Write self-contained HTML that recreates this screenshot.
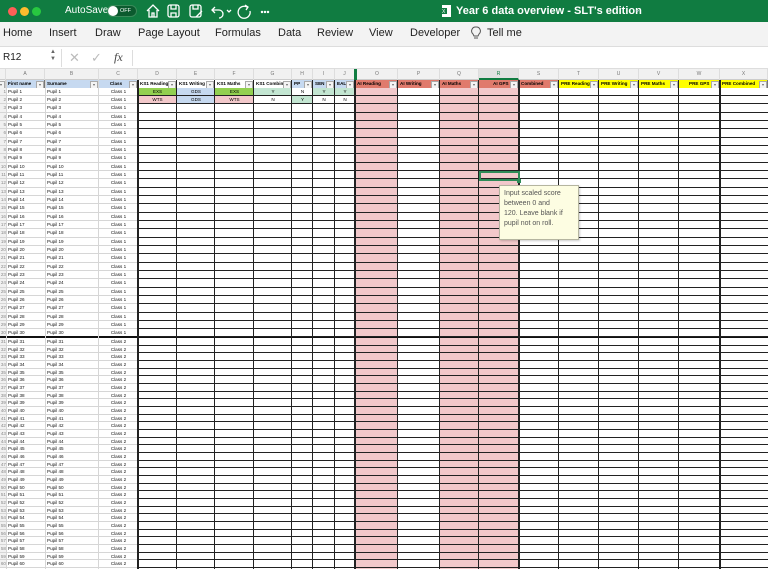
<!DOCTYPE html>
<html><head><meta charset="utf-8"><style>
*{margin:0;padding:0;box-sizing:border-box}
body{width:768px;height:569px;overflow:hidden;background:#fff;font-family:"Liberation Sans",sans-serif;position:relative}
.title{position:absolute;left:0;top:0;width:768px;height:22px;background:#107c41;color:#fff}
.dot{position:absolute;top:7px;width:9px;height:9px;border-radius:50%}
.rib{position:absolute;top:22px;left:0;width:768px;height:24px;background:#f3f3f3;font-size:11px;color:#222}
.rib span{position:absolute;top:5px}
.fb{position:absolute;top:46px;left:0;width:768px;height:23px;background:#fff;border-top:1px solid #ddd;border-bottom:1px solid #ddd}
.ch{position:absolute;top:69px;left:0;width:768px;height:11px;background:#f1f1f1;border-bottom:1px solid #ccc;font-size:5px;color:#777}
.ch span{position:absolute;text-align:center;border-right:1px solid #ddd;height:11px;top:0;line-height:11px}
.hdr{position:absolute;top:80px;left:0;width:768px;height:8px;border-bottom:1px solid #000}
.hdr div{position:absolute;top:0;height:8px;font-size:4.6px;font-weight:bold;line-height:8px;padding-left:2px;overflow:hidden;white-space:nowrap;border-right:1px solid #777}
.hdr div:after{content:"▾";position:absolute;right:0;top:1px;width:6px;height:6px;background:#f4f4f4;border:1px solid #aaa;font-size:4px;line-height:5px;text-align:center;color:#666;font-weight:normal}
.rows{position:absolute;top:88px;left:0;width:768px}
.r{position:relative;width:768px;border-bottom:1px solid #d6d6d6;font-size:4.6px;line-height:7px;white-space:nowrap}
.r1{height:8px}.r1:nth-child(3n){height:9px}
.r2{height:8px}.r2:nth-child(3n+2){height:7px}
.r:after{content:"";position:absolute;left:138px;right:0;bottom:-1px;height:1px;background:#222}
.r i{position:absolute;left:0;width:6px;overflow:hidden;direction:rtl;font-style:normal;color:#888;background:#f1f1f1;height:100%}
.r b{position:absolute;font-weight:normal;color:#111}
.a{left:8px}.b{left:47px}.c{left:99px;width:39px;text-align:center}
.v{position:absolute;top:80px;height:489px;width:1px;background:#222}
.vg{position:absolute;top:80px;height:489px;width:1px;background:#d6d6d6}
.pk{position:absolute;top:88px;height:481px;background:#f2c8ca}
.cell{position:absolute;font-size:4.6px;text-align:center;line-height:7px;height:7px}
</style></head><body>
<div class="title">
<div class="dot" style="left:8px;background:#ff5f57"></div>
<div class="dot" style="left:20px;background:#febc2e"></div>
<div class="dot" style="left:32px;background:#28c840"></div>
<span style="position:absolute;left:65px;top:5px;font-size:10px">AutoSave</span>
<div style="position:absolute;left:107px;top:5px;width:30px;height:12px;border-radius:6px;background:#0b5a2e;border:1px solid #3a8a5a"></div>
<div style="position:absolute;left:108px;top:6px;width:10px;height:10px;border-radius:50%;background:#fff"></div>
<span style="position:absolute;left:120px;top:8px;font-size:5.5px">OFF</span>
<svg style="position:absolute;left:145px;top:3px" width="130" height="16" fill="none" stroke="#fff" stroke-width="1.3">
<path d="M2 8 L8 2 L14 8 M4 7 V14 H12 V7 M7 14 V10 H9 V14"/>
<rect x="23" y="2" width="11" height="12" rx="2"/><path d="M26 2 V6 H31 V2 M26 14 V10 H31 V14"/>
<rect x="45" y="2" width="11" height="12" rx="2"/><path d="M48 2 V6 H53 V2 M51 14 L57 8"/>
<path d="M70 4 L67 7 L70 10 M67 7 H74 A4 4 0 0 1 74 15"/><path d="M82 7 L84 9 L86 7"/>
<path d="M102 4 A6 6 0 1 0 105 8 M100 2 L103 4 L101 7"/>
<circle cx="117" cy="9" r=".6"/><circle cx="120" cy="9" r=".6"/><circle cx="123" cy="9" r=".6"/>
</svg>
<svg style="position:absolute;left:441px;top:5px" width="11" height="12"><rect x="1" y="0" width="9" height="12" fill="#fff"/><rect x="0" y="3" width="6" height="6" fill="#107c41"/><text x="1" y="8" font-size="5" fill="#fff">X</text></svg>
<span style="position:absolute;left:456px;top:5px;font-size:11px;font-weight:bold">Year 6 data overview - SLT's edition</span>
<span style="position:absolute;left:634px;top:5px;font-size:8px;color:#bcd">⌄</span>
</div>
<div class="rib">
<span style="left:3px">Home</span><span style="left:49px">Insert</span><span style="left:95px">Draw</span><span style="left:138px">Page Layout</span><span style="left:215px">Formulas</span><span style="left:278px">Data</span><span style="left:317px">Review</span><span style="left:369px">View</span><span style="left:410px">Developer</span>
<svg style="position:absolute;left:471px;top:4px" width="10" height="14" fill="none" stroke="#555" stroke-width="1"><path d="M5 1 A4 4 0 0 1 8 8 L7 10 H3 L2 8 A4 4 0 0 1 5 1 M3 12 H7"/></svg>
<span style="left:487px">Tell me</span>
</div>
<div class="fb">
<span style="position:absolute;left:3px;top:5px;font-size:10px;color:#222">R12</span>
<span style="position:absolute;left:50px;top:2px;font-size:6px;color:#666;line-height:7px">▲<br>▼</span>
<div style="position:absolute;left:61px;top:2px;width:1px;height:18px;background:#ddd"></div>
<span style="position:absolute;left:69px;top:3px;font-size:13px;color:#bbb">✕</span>
<span style="position:absolute;left:91px;top:3px;font-size:13px;color:#bbb">✓</span>
<span style="position:absolute;left:114px;top:3px;font-size:12px;color:#444;font-style:italic;font-family:'Liberation Serif',serif">fx</span>
<div style="position:absolute;left:132px;top:3px;width:1px;height:16px;background:#ddd"></div>
</div>
<div class="ch">
<span style="left:0;width:6px"></span><span style="left:6px;width:39px">A</span><span style="left:45px;width:54px">B</span><span style="left:99px;width:39px">C</span><span style="left:138px;width:39px">D</span><span style="left:177px;width:38px">E</span><span style="left:215px;width:39px">F</span><span style="left:254px;width:38px">G</span><span style="left:292px;width:21px">H</span><span style="left:313px;width:22px">I</span><span style="left:335px;width:20px">J</span><span style="left:355px;width:43px;border-left:2px solid #107c41">O</span><span style="left:398px;width:42px">P</span><span style="left:440px;width:39px">Q</span><span style="left:479px;width:40px;background:#e2e2e2;color:#107c41;border-bottom:2px solid #107c41">R</span><span style="left:519px;width:40px">S</span><span style="left:559px;width:40px">T</span><span style="left:599px;width:40px">U</span><span style="left:639px;width:40px">V</span><span style="left:679px;width:41px">W</span><span style="left:720px;width:48px">X</span>
</div>
<div class="pk" style="left:355px;width:43px"></div>
<div class="pk" style="left:440px;width:79px"></div>
<div class="hdr">
<div style="left:0;width:6px;background:#f1f1f1;border-right:1px solid #ccc"></div>
<div style="left:6px;width:39px;background:#c6d9f0">First name</div>
<div style="left:45px;width:54px;background:#c6d9f0">Surname</div>
<div style="left:99px;width:39px;background:#c6d9f0;text-align:center;padding-right:6px">Class</div>
<div style="left:138px;width:39px;background:#fff">KS1 Reading</div>
<div style="left:177px;width:38px;background:#fff">KS1 Writing</div>
<div style="left:215px;width:39px;background:#fff">KS1 Maths</div>
<div style="left:254px;width:38px;background:#fff">KS1 Combined</div>
<div style="left:292px;width:21px;background:#c6d9f0">PP</div>
<div style="left:313px;width:22px;background:#c6d9f0">SEN</div>
<div style="left:335px;width:20px;background:#c6d9f0">EAL</div>
<div style="left:355px;width:43px;background:#e07a6c">AI Reading</div>
<div style="left:398px;width:42px;background:#e07a6c">AI Writing</div>
<div style="left:440px;width:39px;background:#e07a6c">AI Maths</div>
<div style="left:479px;width:40px;background:#e07a6c;padding-left:14px">AI GPS</div>
<div style="left:519px;width:40px;background:#e07a6c">Combined</div>
<div style="left:559px;width:40px;background:#ffff00">PRE Reading</div>
<div style="left:599px;width:40px;background:#ffff00">PRE Writing</div>
<div style="left:639px;width:40px;background:#ffff00">PRE Maths</div>
<div style="left:679px;width:41px;background:#ffff00;padding-left:10px">PRE GPS</div>
<div style="left:720px;width:48px;background:#ffff00">PRE Combined</div>
</div>
<div class="cell" style="left:138px;top:88px;width:39px;background:#92d050">EXS</div>
<div class="cell" style="left:177px;top:88px;width:38px;background:#c6d9f0">GDS</div>
<div class="cell" style="left:215px;top:88px;width:39px;background:#92d050">EXS</div>
<div class="cell" style="left:254px;top:88px;width:38px;background:#c3e6d2">Y</div>
<div class="cell" style="left:292px;top:88px;width:21px">N</div>
<div class="cell" style="left:313px;top:88px;width:22px;background:#c3e6d2">Y</div>
<div class="cell" style="left:335px;top:88px;width:20px;background:#c3e6d2">Y</div>
<div class="cell" style="left:138px;top:96px;width:39px;background:#f2c8ca">WTS</div>
<div class="cell" style="left:177px;top:96px;width:38px;background:#c6d9f0">GDS</div>
<div class="cell" style="left:215px;top:96px;width:39px;background:#f2c8ca">WTS</div>
<div class="cell" style="left:254px;top:96px;width:38px">N</div>
<div class="cell" style="left:292px;top:96px;width:21px;background:#c3e6d2">Y</div>
<div class="cell" style="left:313px;top:96px;width:22px">N</div>
<div class="cell" style="left:335px;top:96px;width:20px">N</div>
<div class="rows">
<div class="r r1"><i>1</i><b class="a">Pupil 1</b><b class="b">Pupil 1</b><b class="c">Class 1</b></div>
<div class="r r1"><i>2</i><b class="a">Pupil 2</b><b class="b">Pupil 2</b><b class="c">Class 1</b></div>
<div class="r r1"><i>3</i><b class="a">Pupil 3</b><b class="b">Pupil 3</b><b class="c">Class 1</b></div>
<div class="r r1"><i>4</i><b class="a">Pupil 4</b><b class="b">Pupil 4</b><b class="c">Class 1</b></div>
<div class="r r1"><i>5</i><b class="a">Pupil 5</b><b class="b">Pupil 5</b><b class="c">Class 1</b></div>
<div class="r r1"><i>6</i><b class="a">Pupil 6</b><b class="b">Pupil 6</b><b class="c">Class 1</b></div>
<div class="r r1"><i>7</i><b class="a">Pupil 7</b><b class="b">Pupil 7</b><b class="c">Class 1</b></div>
<div class="r r1"><i>8</i><b class="a">Pupil 8</b><b class="b">Pupil 8</b><b class="c">Class 1</b></div>
<div class="r r1"><i>9</i><b class="a">Pupil 9</b><b class="b">Pupil 9</b><b class="c">Class 1</b></div>
<div class="r r1"><i>10</i><b class="a">Pupil 10</b><b class="b">Pupil 10</b><b class="c">Class 1</b></div>
<div class="r r1"><i>11</i><b class="a">Pupil 11</b><b class="b">Pupil 11</b><b class="c">Class 1</b></div>
<div class="r r1"><i>12</i><b class="a">Pupil 12</b><b class="b">Pupil 12</b><b class="c">Class 1</b></div>
<div class="r r1"><i>13</i><b class="a">Pupil 13</b><b class="b">Pupil 13</b><b class="c">Class 1</b></div>
<div class="r r1"><i>14</i><b class="a">Pupil 14</b><b class="b">Pupil 14</b><b class="c">Class 1</b></div>
<div class="r r1"><i>15</i><b class="a">Pupil 15</b><b class="b">Pupil 15</b><b class="c">Class 1</b></div>
<div class="r r1"><i>16</i><b class="a">Pupil 16</b><b class="b">Pupil 16</b><b class="c">Class 1</b></div>
<div class="r r1"><i>17</i><b class="a">Pupil 17</b><b class="b">Pupil 17</b><b class="c">Class 1</b></div>
<div class="r r1"><i>18</i><b class="a">Pupil 18</b><b class="b">Pupil 18</b><b class="c">Class 1</b></div>
<div class="r r1"><i>19</i><b class="a">Pupil 19</b><b class="b">Pupil 19</b><b class="c">Class 1</b></div>
<div class="r r1"><i>20</i><b class="a">Pupil 20</b><b class="b">Pupil 20</b><b class="c">Class 1</b></div>
<div class="r r1"><i>21</i><b class="a">Pupil 21</b><b class="b">Pupil 21</b><b class="c">Class 1</b></div>
<div class="r r1"><i>22</i><b class="a">Pupil 22</b><b class="b">Pupil 22</b><b class="c">Class 1</b></div>
<div class="r r1"><i>23</i><b class="a">Pupil 23</b><b class="b">Pupil 23</b><b class="c">Class 1</b></div>
<div class="r r1"><i>24</i><b class="a">Pupil 24</b><b class="b">Pupil 24</b><b class="c">Class 1</b></div>
<div class="r r1"><i>25</i><b class="a">Pupil 25</b><b class="b">Pupil 25</b><b class="c">Class 1</b></div>
<div class="r r1"><i>26</i><b class="a">Pupil 26</b><b class="b">Pupil 26</b><b class="c">Class 1</b></div>
<div class="r r1"><i>27</i><b class="a">Pupil 27</b><b class="b">Pupil 27</b><b class="c">Class 1</b></div>
<div class="r r1"><i>28</i><b class="a">Pupil 28</b><b class="b">Pupil 28</b><b class="c">Class 1</b></div>
<div class="r r1"><i>29</i><b class="a">Pupil 29</b><b class="b">Pupil 29</b><b class="c">Class 1</b></div>
<div class="r r1" style="border-bottom:2px solid #111"><i>30</i><b class="a">Pupil 30</b><b class="b">Pupil 30</b><b class="c">Class 1</b></div>
<div class="r r2"><i>31</i><b class="a">Pupil 31</b><b class="b">Pupil 31</b><b class="c">Class 2</b></div>
<div class="r r2"><i>32</i><b class="a">Pupil 32</b><b class="b">Pupil 32</b><b class="c">Class 2</b></div>
<div class="r r2"><i>33</i><b class="a">Pupil 33</b><b class="b">Pupil 33</b><b class="c">Class 2</b></div>
<div class="r r2"><i>34</i><b class="a">Pupil 34</b><b class="b">Pupil 34</b><b class="c">Class 2</b></div>
<div class="r r2"><i>35</i><b class="a">Pupil 35</b><b class="b">Pupil 35</b><b class="c">Class 2</b></div>
<div class="r r2"><i>36</i><b class="a">Pupil 36</b><b class="b">Pupil 36</b><b class="c">Class 2</b></div>
<div class="r r2"><i>37</i><b class="a">Pupil 37</b><b class="b">Pupil 37</b><b class="c">Class 2</b></div>
<div class="r r2"><i>38</i><b class="a">Pupil 38</b><b class="b">Pupil 38</b><b class="c">Class 2</b></div>
<div class="r r2"><i>39</i><b class="a">Pupil 39</b><b class="b">Pupil 39</b><b class="c">Class 2</b></div>
<div class="r r2"><i>40</i><b class="a">Pupil 40</b><b class="b">Pupil 40</b><b class="c">Class 2</b></div>
<div class="r r2"><i>41</i><b class="a">Pupil 41</b><b class="b">Pupil 41</b><b class="c">Class 2</b></div>
<div class="r r2"><i>42</i><b class="a">Pupil 42</b><b class="b">Pupil 42</b><b class="c">Class 2</b></div>
<div class="r r2"><i>43</i><b class="a">Pupil 43</b><b class="b">Pupil 43</b><b class="c">Class 2</b></div>
<div class="r r2"><i>44</i><b class="a">Pupil 44</b><b class="b">Pupil 44</b><b class="c">Class 2</b></div>
<div class="r r2"><i>45</i><b class="a">Pupil 45</b><b class="b">Pupil 45</b><b class="c">Class 2</b></div>
<div class="r r2"><i>46</i><b class="a">Pupil 46</b><b class="b">Pupil 46</b><b class="c">Class 2</b></div>
<div class="r r2"><i>47</i><b class="a">Pupil 47</b><b class="b">Pupil 47</b><b class="c">Class 2</b></div>
<div class="r r2"><i>48</i><b class="a">Pupil 48</b><b class="b">Pupil 48</b><b class="c">Class 2</b></div>
<div class="r r2"><i>49</i><b class="a">Pupil 49</b><b class="b">Pupil 49</b><b class="c">Class 2</b></div>
<div class="r r2"><i>50</i><b class="a">Pupil 50</b><b class="b">Pupil 50</b><b class="c">Class 2</b></div>
<div class="r r2"><i>51</i><b class="a">Pupil 51</b><b class="b">Pupil 51</b><b class="c">Class 2</b></div>
<div class="r r2"><i>52</i><b class="a">Pupil 52</b><b class="b">Pupil 52</b><b class="c">Class 2</b></div>
<div class="r r2"><i>53</i><b class="a">Pupil 53</b><b class="b">Pupil 53</b><b class="c">Class 2</b></div>
<div class="r r2"><i>54</i><b class="a">Pupil 54</b><b class="b">Pupil 54</b><b class="c">Class 2</b></div>
<div class="r r2"><i>55</i><b class="a">Pupil 55</b><b class="b">Pupil 55</b><b class="c">Class 2</b></div>
<div class="r r2"><i>56</i><b class="a">Pupil 56</b><b class="b">Pupil 56</b><b class="c">Class 2</b></div>
<div class="r r2"><i>57</i><b class="a">Pupil 57</b><b class="b">Pupil 57</b><b class="c">Class 2</b></div>
<div class="r r2"><i>58</i><b class="a">Pupil 58</b><b class="b">Pupil 58</b><b class="c">Class 2</b></div>
<div class="r r2"><i>59</i><b class="a">Pupil 59</b><b class="b">Pupil 59</b><b class="c">Class 2</b></div>
<div class="r r2"><i>60</i><b class="a">Pupil 60</b><b class="b">Pupil 60</b><b class="c">Class 2</b></div>
</div>
<div class="vg" style="left:6px"></div><div class="vg" style="left:45px"></div><div class="vg" style="left:98px"></div>
<div class="v" style="left:137px;width:2px"></div><div class="v" style="left:176px"></div><div class="v" style="left:214px"></div><div class="v" style="left:253px"></div><div class="v" style="left:291px"></div><div class="v" style="left:312px"></div><div class="v" style="left:334px"></div><div class="v" style="left:354px;width:2px"></div><div class="v" style="left:397px"></div><div class="v" style="left:439px"></div><div class="v" style="left:478px"></div><div class="v" style="left:518px;width:2px"></div><div class="v" style="left:558px"></div><div class="v" style="left:598px"></div><div class="v" style="left:638px"></div><div class="v" style="left:678px"></div><div class="v" style="left:719px;width:2px"></div>
<div style="position:absolute;left:354px;top:69px;width:2px;height:11px;background:#107c41"></div>
<div style="position:absolute;left:479px;top:171px;width:41px;height:10px;border:2px solid #2e8b57"></div>
<div style="position:absolute;left:517px;top:179px;width:4px;height:4px;background:#2e8b57"></div>
<div style="position:absolute;left:499px;top:185px;width:80px;height:55px;background:#fdfde2;border:1px solid #b5b5a0;box-shadow:1px 1px 2px rgba(0,0,0,.2);font-size:7px;line-height:10px;color:#555;padding:3px 0 0 4px">Input scaled score<br>between 0 and<br>120. Leave blank if<br>pupil not on roll.</div>
</body></html>
